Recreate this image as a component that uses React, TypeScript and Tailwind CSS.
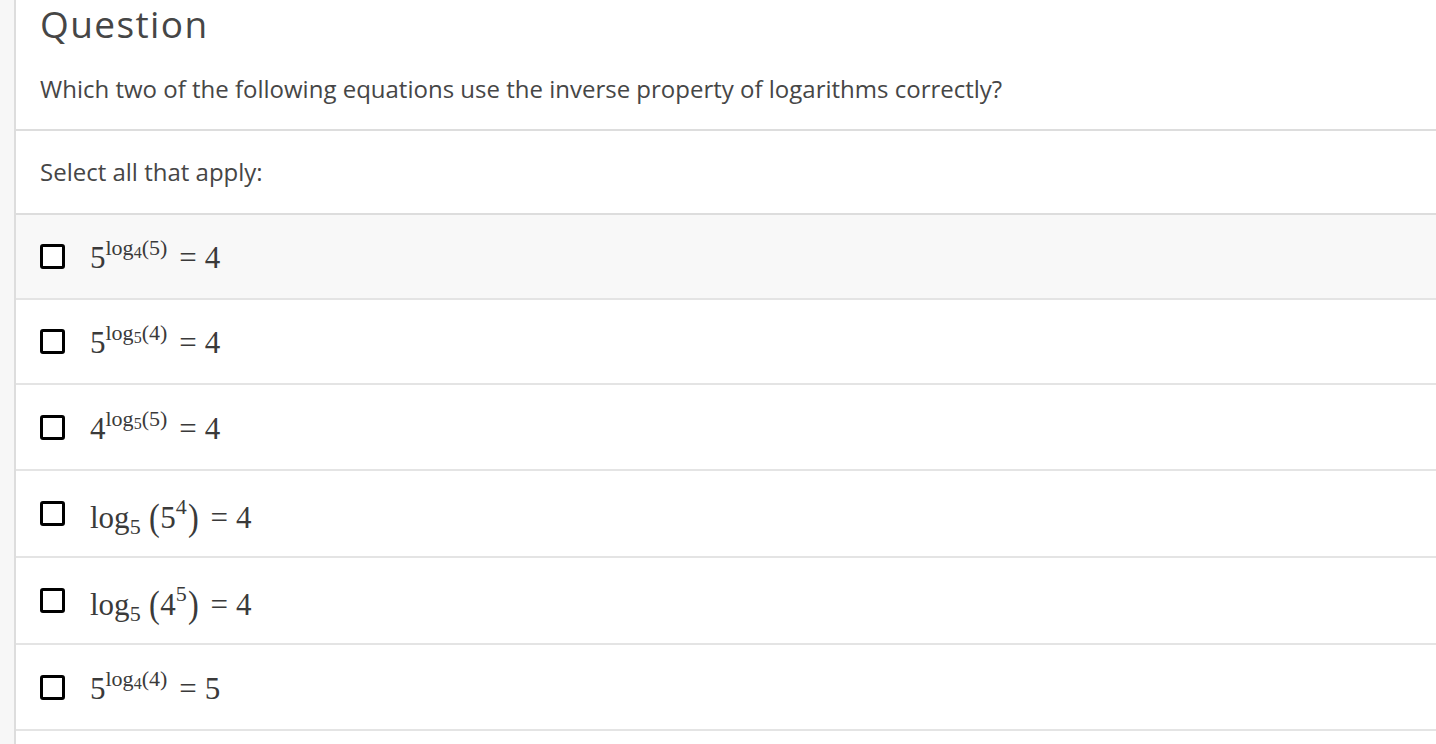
import React from "react";

const serif = { fontFamily: '"Liberation Serif", "Times New Roman", serif' };

function Box() {
  return <div className="w-[25px] h-[25px] shrink-0 border-[3px] border-black rounded-[3px] bg-white" />;
}

function PowLog({ base, sub, arg, rhs }: { base: string; sub: string; arg: string; rhs: string }) {
  return (
    <div className="flex items-baseline text-[31px] leading-none text-[#3a3a3a] relative top-[1px]" style={serif}>
      <span>{base}</span>
      <span className="relative -top-[13px] text-[22px] leading-none">
        log<span className="relative top-[3px] text-[16px]">{sub}</span>({arg})
      </span>
      <span className="ml-[12px]">=</span>
      <span className="ml-[8px]">{rhs}</span>
    </div>
  );
}

function LogPow({ sub, b, e, rhs }: { sub: string; b: string; e: string; rhs: string }) {
  return (
    <div className="flex items-baseline text-[31px] leading-none text-[#3a3a3a] relative top-[1px]" style={serif}>
      <span>log</span>
      <span className="relative top-[6px] text-[22px]">{sub}</span>
      <span className="ml-[7px] text-[38px] relative top-[2px] scale-x-[0.85] inline-block">(</span>
      <span>{b}</span>
      <span className="relative -top-[14px] text-[22px]">{e}</span>
      <span className="text-[38px] relative top-[2px] scale-x-[0.85] inline-block">)</span>
      <span className="ml-[11px]">=</span>
      <span className="ml-[8px]">{rhs}</span>
    </div>
  );
}

function Row({ children, hl, h }: { children: React.ReactNode; hl?: boolean; h: string }) {
  return (
    <div className={`${h} border-b-2 border-[#e4e4e4] flex items-center pl-[24px] gap-[25px] ${hl ? "bg-[#f8f8f8]" : "bg-white"}`}>
      <Box />
      {children}
    </div>
  );
}

export default function App() {
  const sans = { fontFamily: '"Open Sans", "Liberation Sans", sans-serif' };
  return (
    <div className="flex w-[1436px] h-[744px] overflow-hidden bg-white" style={sans}>
      <div className="w-[14px] shrink-0 bg-[#f7f7f7]" />
      <div className="flex-1 border-l-2 border-[#dddddd] flex flex-col">
        <div className="h-[131px] shrink-0 border-b-2 border-[#dddddd] pl-[24px]">
          <div className="h-[48px] leading-[48px] text-[37px] tracking-[1.4px] text-[#464646]">Question</div>
          <div className="mt-[25px] text-[24px] leading-[32px] text-[#464646]">
            Which two of the following equations use the inverse property of logarithms correctly?
          </div>
        </div>
        <div className="h-[84px] shrink-0 border-b-2 border-[#dddddd] pl-[24px] flex items-center">
          <div className="text-[24px] leading-[32px] text-[#464646]">Select all that apply:</div>
        </div>
        <Row hl h="h-[85px] shrink-0">
          <PowLog base="5" sub="4" arg="5" rhs="4" />
        </Row>
        <Row h="h-[85px] shrink-0">
          <PowLog base="5" sub="5" arg="4" rhs="4" />
        </Row>
        <Row h="h-[86px] shrink-0">
          <PowLog base="4" sub="5" arg="5" rhs="4" />
        </Row>
        <Row h="h-[87px] shrink-0">
          <LogPow sub="5" b="5" e="4" rhs="4" />
        </Row>
        <Row h="h-[87px] shrink-0">
          <LogPow sub="5" b="4" e="5" rhs="4" />
        </Row>
        <Row h="h-[86px] shrink-0">
          <PowLog base="5" sub="4" arg="4" rhs="5" />
        </Row>
      </div>
    </div>
  );
}
